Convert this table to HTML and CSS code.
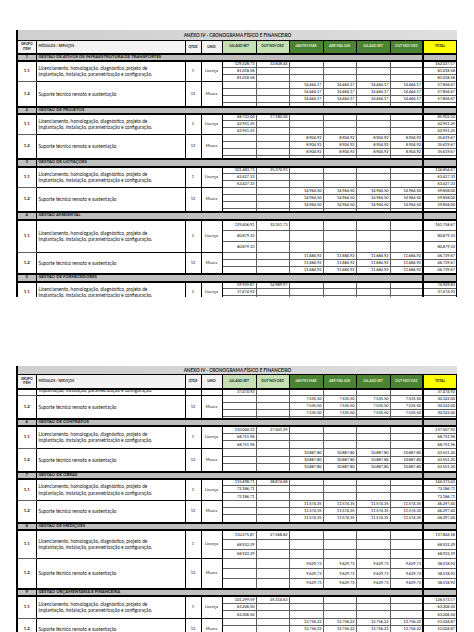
FILE: index.html
```html
<!DOCTYPE html>
<html lang="pt">
<head>
<meta charset="utf-8">
<title>Anexo IV - Cronograma Físico e Financeiro</title>
<link rel="stylesheet" href="styles.css">
</head>
<body>
<div class="page p1">
  <div class="title">ANEXO IV - CRONOGRAMA FÍSICO E FINANCEIRO</div>
  <table class="grid">
    <colgroup><col class="w1"><col class="w2"><col class="w3"><col class="w4"><col class="w5"><col class="w6"><col class="w5"><col class="w6"><col class="w5"><col class="w6"><col class="w5"></colgroup>
    <tr class="hd h13"><td class="hc first">GRUPO<br>ITEM</td><td class="hl">MÓDULOS / SERVIÇOS</td><td class="hc">QTDE</td><td class="hc">UNID</td><td class="g1">JUL AGO SET</td><td class="g1">OUT NOV DEZ</td><td class="g2">JAN FEV MAR</td><td class="g2">ABR MAI JUN</td><td class="g2">JUL AGO SET</td><td class="g2">OUT NOV DEZ</td><td class="ty">TOTAL</td></tr>

    <tr class="sec h7"><td class="n">1</td><td class="st" colspan="9">GESTÃO DE ATIVOS DE INFRAESTRUTURA DE TRANSPORTES</td><td class="t"></td></tr>
    <tr class="h7"><td class="it" rowspan="3">1.1</td><td class="d" rowspan="3">Licenciamento, homologação, diagnóstico, projeto de<br>implantação, instalação, parametrização e configuração.</td><td class="c" rowspan="3">1</td><td class="c" rowspan="3">Licença</td><td class="m">129.428,73</td><td class="m">32.608,44</td><td class="m"></td><td class="m"></td><td class="m"></td><td class="m"></td><td class="m t">162.037,17</td></tr>
    <tr class="h7"><td class="m">81.018,58</td><td class="m"></td><td class="m"></td><td class="m"></td><td class="m"></td><td class="m"></td><td class="m t">81.018,58</td></tr>
    <tr class="h7"><td class="m">81.018,58</td><td class="m"></td><td class="m"></td><td class="m"></td><td class="m"></td><td class="m"></td><td class="m t">81.018,58</td></tr>
    <tr class="h7"><td class="it" rowspan="4">1.2</td><td class="d" rowspan="4">Suporte técnico remoto e sustentação</td><td class="c" rowspan="4">12</td><td class="c" rowspan="4">Meses</td><td class="m"></td><td class="m"></td><td class="m">14.464,17</td><td class="m">14.464,17</td><td class="m">14.464,17</td><td class="m">14.464,17</td><td class="m t">57.856,67</td></tr>
    <tr class="h7"><td class="m"></td><td class="m"></td><td class="m">14.464,17</td><td class="m">14.464,17</td><td class="m">14.464,17</td><td class="m">14.464,17</td><td class="m t">57.856,67</td></tr>
    <tr class="h7"><td class="m"></td><td class="m"></td><td class="m">14.464,17</td><td class="m">14.464,17</td><td class="m">14.464,17</td><td class="m">14.464,17</td><td class="m t">57.856,67</td></tr>
    <tr class="h4"><td class="m"></td><td class="m"></td><td class="m"></td><td class="m"></td><td class="m"></td><td class="m"></td><td class="m t"></td></tr>

    <tr class="sec h7"><td class="n">2</td><td class="st" colspan="9">GESTÃO DE PROJETOS</td><td class="t"></td></tr>
    <tr class="h7"><td class="it" rowspan="3">1.1</td><td class="d" rowspan="3">Licenciamento, homologação, diagnóstico, projeto de<br>implantação, instalação, parametrização e configuração.</td><td class="c" rowspan="3">1</td><td class="c" rowspan="3">Licença</td><td class="m">68.722,00</td><td class="m">17.180,50</td><td class="m"></td><td class="m"></td><td class="m"></td><td class="m"></td><td class="m t">85.902,50</td></tr>
    <tr class="h7"><td class="m">42.951,25</td><td class="m"></td><td class="m"></td><td class="m"></td><td class="m"></td><td class="m"></td><td class="m t">42.951,25</td></tr>
    <tr class="h7"><td class="m">42.951,25</td><td class="m"></td><td class="m"></td><td class="m"></td><td class="m"></td><td class="m"></td><td class="m t">42.951,25</td></tr>
    <tr class="h7"><td class="it" rowspan="4">1.2</td><td class="d" rowspan="4">Suporte técnico remoto e sustentação</td><td class="c" rowspan="4">12</td><td class="c" rowspan="4">Meses</td><td class="m"></td><td class="m"></td><td class="m">8.904,92</td><td class="m">8.904,92</td><td class="m">8.904,92</td><td class="m">8.904,92</td><td class="m t">35.619,67</td></tr>
    <tr class="h7"><td class="m"></td><td class="m"></td><td class="m">8.904,92</td><td class="m">8.904,92</td><td class="m">8.904,92</td><td class="m">8.904,92</td><td class="m t">35.619,67</td></tr>
    <tr class="h7"><td class="m"></td><td class="m"></td><td class="m">8.904,92</td><td class="m">8.904,92</td><td class="m">8.904,92</td><td class="m">8.904,92</td><td class="m t">35.619,67</td></tr>
    <tr class="h3"><td class="m"></td><td class="m"></td><td class="m"></td><td class="m"></td><td class="m"></td><td class="m"></td><td class="m t"></td></tr>

    <tr class="sec h8"><td class="n">3</td><td class="st" colspan="9">GESTÃO DE LICITAÇÕES</td><td class="t"></td></tr>
    <tr class="h7"><td class="it" rowspan="3">1.1</td><td class="d" rowspan="3">Licenciamento, homologação, diagnóstico, projeto de<br>implantação, instalação, parametrização e configuração.</td><td class="c" rowspan="3">1</td><td class="c" rowspan="3">Licença</td><td class="m">101.483,73</td><td class="m">25.370,93</td><td class="m"></td><td class="m"></td><td class="m"></td><td class="m"></td><td class="m t">126.854,67</td></tr>
    <tr class="h7"><td class="m">63.427,33</td><td class="m"></td><td class="m"></td><td class="m"></td><td class="m"></td><td class="m"></td><td class="m t">63.427,33</td></tr>
    <tr class="h7"><td class="m">63.427,33</td><td class="m"></td><td class="m"></td><td class="m"></td><td class="m"></td><td class="m"></td><td class="m t">63.427,33</td></tr>
    <tr class="h7"><td class="it" rowspan="4">1.2</td><td class="d" rowspan="4">Suporte técnico remoto e sustentação</td><td class="c" rowspan="4">12</td><td class="c" rowspan="4">Meses</td><td class="m"></td><td class="m"></td><td class="m">14.964,50</td><td class="m">14.964,50</td><td class="m">14.964,50</td><td class="m">14.964,50</td><td class="m t">59.858,00</td></tr>
    <tr class="h7"><td class="m"></td><td class="m"></td><td class="m">14.964,50</td><td class="m">14.964,50</td><td class="m">14.964,50</td><td class="m">14.964,50</td><td class="m t">59.858,00</td></tr>
    <tr class="h7"><td class="m"></td><td class="m"></td><td class="m">14.964,50</td><td class="m">14.964,50</td><td class="m">14.964,50</td><td class="m">14.964,50</td><td class="m t">59.858,00</td></tr>
    <tr class="h3"><td class="m"></td><td class="m"></td><td class="m"></td><td class="m"></td><td class="m"></td><td class="m"></td><td class="m t"></td></tr>

    <tr class="sec h8"><td class="n">4</td><td class="st" colspan="9">GESTÃO AMBIENTAL</td><td class="t"></td></tr>
    <tr class="h11"><td class="it" rowspan="3">1.1</td><td class="d" rowspan="3">Licenciamento, homologação, diagnóstico, projeto de<br>implantação, instalação, parametrização e configuração.</td><td class="c" rowspan="3">1</td><td class="c" rowspan="3">Licença</td><td class="m">129.406,91</td><td class="m">32.351,73</td><td class="m"></td><td class="m"></td><td class="m"></td><td class="m"></td><td class="m t">161.758,67</td></tr>
    <tr class="h11"><td class="m">80.879,33</td><td class="m"></td><td class="m"></td><td class="m"></td><td class="m"></td><td class="m"></td><td class="m t">80.879,33</td></tr>
    <tr class="h11"><td class="m">80.879,33</td><td class="m"></td><td class="m"></td><td class="m"></td><td class="m"></td><td class="m"></td><td class="m t">80.879,33</td></tr>
    <tr class="h7"><td class="it" rowspan="3">1.2</td><td class="d" rowspan="3">Suporte técnico remoto e sustentação</td><td class="c" rowspan="3">12</td><td class="c" rowspan="3">Meses</td><td class="m"></td><td class="m"></td><td class="m">11.684,92</td><td class="m">11.684,92</td><td class="m">11.684,92</td><td class="m">11.684,92</td><td class="m t">46.739,67</td></tr>
    <tr class="h7"><td class="m"></td><td class="m"></td><td class="m">11.684,92</td><td class="m">11.684,92</td><td class="m">11.684,92</td><td class="m">11.684,92</td><td class="m t">46.739,67</td></tr>
    <tr class="h7"><td class="m"></td><td class="m"></td><td class="m">11.684,92</td><td class="m">11.684,92</td><td class="m">11.684,92</td><td class="m">11.684,92</td><td class="m t">46.739,67</td></tr>

    <tr class="sec h8"><td class="n">5</td><td class="st" colspan="9">GESTÃO DE FORNECEDORES</td><td class="t"></td></tr>
    <tr class="h7"><td class="it" rowspan="3">1.1</td><td class="d" rowspan="3">Licenciamento, homologação, diagnóstico, projeto de<br>implantação, instalação, parametrização e configuração.</td><td class="c" rowspan="3">1</td><td class="c" rowspan="3">Licença</td><td class="m">59.959,87</td><td class="m">14.989,97</td><td class="m"></td><td class="m"></td><td class="m"></td><td class="m"></td><td class="m t">74.949,83</td></tr>
    <tr class="h7"><td class="m">37.474,92</td><td class="m"></td><td class="m"></td><td class="m"></td><td class="m"></td><td class="m"></td><td class="m t">37.474,92</td></tr>
    <tr class="h7"><td class="m"></td><td class="m"></td><td class="m"></td><td class="m"></td><td class="m"></td><td class="m"></td><td class="m t"></td></tr>
  </table>
</div>

<div class="page p2">
  <div class="title">ANEXO IV - CRONOGRAMA FÍSICO E FINANCEIRO</div>
  <table class="grid">
    <colgroup><col class="w1"><col class="w2"><col class="w3"><col class="w4"><col class="w5"><col class="w6"><col class="w5"><col class="w6"><col class="w5"><col class="w6"><col class="w5"></colgroup>
    <tr class="hd h14"><td class="hc first">GRUPO<br>ITEM</td><td class="hl">MÓDULOS / SERVIÇOS</td><td class="hc">QTDE</td><td class="hc">UNID</td><td class="g1">JUL AGO SET</td><td class="g1">OUT NOV DEZ</td><td class="g2">JAN FEV MAR</td><td class="g2">ABR MAI JUN</td><td class="g2">JUL AGO SET</td><td class="g2">OUT NOV DEZ</td><td class="ty">TOTAL</td></tr>

    <tr class="h7"><td class="it"></td><td class="d top"><div class="clip"><span>implantação, instalação, parametrização e configuração.</span></div></td><td class="c"></td><td class="c"></td><td class="m">37.474,92</td><td class="m"></td><td class="m"></td><td class="m"></td><td class="m"></td><td class="m"></td><td class="m t">37.474,92</td></tr>
    <tr class="h7"><td class="it" rowspan="4">1.2</td><td class="d" rowspan="4">Suporte técnico remoto e sustentação</td><td class="c" rowspan="4">12</td><td class="c" rowspan="4">Meses</td><td class="m"></td><td class="m"></td><td class="m">7.535,50</td><td class="m">7.535,50</td><td class="m">7.535,50</td><td class="m">7.535,50</td><td class="m t">30.142,00</td></tr>
    <tr class="h7"><td class="m"></td><td class="m"></td><td class="m">7.535,50</td><td class="m">7.535,50</td><td class="m">7.535,50</td><td class="m">7.535,50</td><td class="m t">30.142,00</td></tr>
    <tr class="h7"><td class="m"></td><td class="m"></td><td class="m">7.535,50</td><td class="m">7.535,50</td><td class="m">7.535,50</td><td class="m">7.535,50</td><td class="m t">30.142,00</td></tr>
    <tr class="h2"><td class="m"></td><td class="m"></td><td class="m"></td><td class="m"></td><td class="m"></td><td class="m"></td><td class="m t"></td></tr>

    <tr class="sec h7"><td class="n">6</td><td class="st" colspan="9">GESTÃO DE CONTRATOS</td><td class="t"></td></tr>
    <tr class="h8"><td class="it" rowspan="3">1.1</td><td class="d" rowspan="3">Licenciamento, homologação, diagnóstico, projeto de<br>implantação, instalação, parametrização e configuração.</td><td class="c" rowspan="3">1</td><td class="c" rowspan="3">Licença</td><td class="m">110.004,33</td><td class="m">27.501,59</td><td class="m"></td><td class="m"></td><td class="m"></td><td class="m"></td><td class="m t">137.507,92</td></tr>
    <tr class="h7"><td class="m">68.751,96</td><td class="m"></td><td class="m"></td><td class="m"></td><td class="m"></td><td class="m"></td><td class="m t">68.751,96</td></tr>
    <tr class="h8"><td class="m">68.751,96</td><td class="m"></td><td class="m"></td><td class="m"></td><td class="m"></td><td class="m"></td><td class="m t">68.751,96</td></tr>
    <tr class="h8"><td class="it" rowspan="3">1.2</td><td class="d" rowspan="3">Suporte técnico remoto e sustentação</td><td class="c" rowspan="3">12</td><td class="c" rowspan="3">Meses</td><td class="m"></td><td class="m"></td><td class="m">10.887,80</td><td class="m">10.887,80</td><td class="m">10.887,80</td><td class="m">10.887,80</td><td class="m t">43.551,20</td></tr>
    <tr class="h7"><td class="m"></td><td class="m"></td><td class="m">10.887,80</td><td class="m">10.887,80</td><td class="m">10.887,80</td><td class="m">10.887,80</td><td class="m t">43.551,20</td></tr>
    <tr class="h8"><td class="m"></td><td class="m"></td><td class="m">10.887,80</td><td class="m">10.887,80</td><td class="m">10.887,80</td><td class="m">10.887,80</td><td class="m t">43.551,20</td></tr>

    <tr class="sec h7"><td class="n">7</td><td class="st" colspan="9">GESTÃO DE OBRAS</td><td class="t"></td></tr>
    <tr class="h7"><td class="it" rowspan="3">1.1</td><td class="d" rowspan="3">Licenciamento, homologação, diagnóstico, projeto de<br>implantação, instalação, parametrização e configuração.</td><td class="c" rowspan="3">1</td><td class="c" rowspan="3">Licença</td><td class="m">115.498,71</td><td class="m">28.874,68</td><td class="m"></td><td class="m"></td><td class="m"></td><td class="m"></td><td class="m t">144.373,42</td></tr>
    <tr class="h7"><td class="m">72.186,71</td><td class="m"></td><td class="m"></td><td class="m"></td><td class="m"></td><td class="m"></td><td class="m t">72.186,71</td></tr>
    <tr class="h8"><td class="m">72.186,71</td><td class="m"></td><td class="m"></td><td class="m"></td><td class="m"></td><td class="m"></td><td class="m t">72.186,71</td></tr>
    <tr class="h7"><td class="it" rowspan="3">1.2</td><td class="d" rowspan="3">Suporte técnico remoto e sustentação</td><td class="c" rowspan="3">12</td><td class="c" rowspan="3">Meses</td><td class="m"></td><td class="m"></td><td class="m">11.574,35</td><td class="m">11.574,35</td><td class="m">11.574,35</td><td class="m">11.574,35</td><td class="m t">46.297,40</td></tr>
    <tr class="h7"><td class="m"></td><td class="m"></td><td class="m">11.574,35</td><td class="m">11.574,35</td><td class="m">11.574,35</td><td class="m">11.574,35</td><td class="m t">46.297,40</td></tr>
    <tr class="h8"><td class="m"></td><td class="m"></td><td class="m">11.574,35</td><td class="m">11.574,35</td><td class="m">11.574,35</td><td class="m">11.574,35</td><td class="m t">46.297,40</td></tr>

    <tr class="sec h7"><td class="n">8</td><td class="st" colspan="9">GESTÃO DE MEDIÇÕES</td><td class="t"></td></tr>
    <tr class="h10"><td class="it" rowspan="3">1.1</td><td class="d" rowspan="3">Licenciamento, homologação, diagnóstico, projeto de<br>implantação, instalação, parametrização e configuração.</td><td class="c" rowspan="3">1</td><td class="c" rowspan="3">Licença</td><td class="m">110.275,87</td><td class="m">27.568,82</td><td class="m"></td><td class="m"></td><td class="m"></td><td class="m"></td><td class="m t">137.844,58</td></tr>
    <tr class="h10"><td class="m">68.922,29</td><td class="m"></td><td class="m"></td><td class="m"></td><td class="m"></td><td class="m"></td><td class="m t">68.922,29</td></tr>
    <tr class="h9"><td class="m">68.922,29</td><td class="m"></td><td class="m"></td><td class="m"></td><td class="m"></td><td class="m"></td><td class="m t">68.922,29</td></tr>
    <tr class="h10"><td class="it" rowspan="3">1.2</td><td class="d" rowspan="3">Suporte técnico remoto e sustentação</td><td class="c" rowspan="3">12</td><td class="c" rowspan="3">Meses</td><td class="m"></td><td class="m"></td><td class="m">9.629,73</td><td class="m">9.629,73</td><td class="m">9.629,73</td><td class="m">9.629,73</td><td class="m t">38.518,92</td></tr>
    <tr class="h10"><td class="m"></td><td class="m"></td><td class="m">9.629,73</td><td class="m">9.629,73</td><td class="m">9.629,73</td><td class="m">9.629,73</td><td class="m t">38.518,92</td></tr>
    <tr class="h10"><td class="m"></td><td class="m"></td><td class="m">9.629,73</td><td class="m">9.629,73</td><td class="m">9.629,73</td><td class="m">9.629,73</td><td class="m t">38.518,92</td></tr>

    <tr class="sec h7"><td class="n">9</td><td class="st" colspan="9">GESTÃO ORÇAMENTÁRIA E FINANCEIRA</td><td class="t"></td></tr>
    <tr class="h8"><td class="it" rowspan="3">1.1</td><td class="d" rowspan="3">Licenciamento, homologação, diagnóstico, projeto de<br>implantação, instalação, parametrização e configuração.</td><td class="c" rowspan="3">1</td><td class="c" rowspan="3">Licença</td><td class="m">101.299,59</td><td class="m">25.314,63</td><td class="m"></td><td class="m"></td><td class="m"></td><td class="m"></td><td class="m t">126.573,17</td></tr>
    <tr class="h7"><td class="m">63.206,50</td><td class="m"></td><td class="m"></td><td class="m"></td><td class="m"></td><td class="m"></td><td class="m t">63.206,50</td></tr>
    <tr class="h8"><td class="m">63.206,50</td><td class="m"></td><td class="m"></td><td class="m"></td><td class="m"></td><td class="m"></td><td class="m t">63.206,50</td></tr>
    <tr class="h7"><td class="it" rowspan="3">1.2</td><td class="d" rowspan="3">Suporte técnico remoto e sustentação</td><td class="c" rowspan="3">12</td><td class="c" rowspan="3">Meses</td><td class="m"></td><td class="m"></td><td class="m">12.756,22</td><td class="m">12.756,22</td><td class="m">12.756,22</td><td class="m">12.756,22</td><td class="m t">51.024,87</td></tr>
    <tr class="h7"><td class="m"></td><td class="m"></td><td class="m">12.756,22</td><td class="m">12.756,22</td><td class="m">12.756,22</td><td class="m">12.756,22</td><td class="m t">51.024,87</td></tr>
    <tr class="h7"><td class="m"></td><td class="m"></td><td class="m">12.756,22</td><td class="m">12.756,22</td><td class="m">12.756,22</td><td class="m">12.756,22</td><td class="m t">51.024,87</td></tr>
  </table>
</div>
</body>
</html>
```

FILE: styles.css
```css
* { box-sizing: border-box; }
html, body { margin: 0; padding: 0; background: #fff; }
body { font-family: Lato, "Liberation Sans", sans-serif; color: #111; }

.page { margin-left: 16px; width: 441px; overflow: hidden; }
.p1 { margin-top: 30px; height: 267px; }
.p2 { margin-top: 69px; }

.title {
  background: linear-gradient(90deg, #cfcfcf, #d8d8d8 60%, #dedede);
  border-left: 2px solid #000;
  font-weight: 700;
  font-size: 4.6px;
  text-align: center;
  color: #1a1a1a;
}
.p1 .title { height: 10px; line-height: 10px; }
.p2 .title { height: 8px; line-height: 8px; }

.grid { border-collapse: collapse; table-layout: fixed; width: 441px; }
.w1 { width: 19px; }
.w2 { width: 149px; }
.w3 { width: 16px; }
.w4 { width: 21px; }
.w5 { width: 34px; }
.w6 { width: 33px; }

.grid td {
  padding: 0;
  border: 1px solid #5e5e5e;
  overflow: hidden;
  white-space: nowrap;
  vertical-align: middle;
  line-height: 1;
}

.h2 { height: 2px; }
.h3 { height: 3px; }
.h4 { height: 4px; }
.h7 { height: 7px; }
.h8 { height: 8px; }
.h9 { height: 9px; }
.h10 { height: 10px; }
.h11 { height: 11px; }
.h13 { height: 13px; }
.h14 { height: 14px; }

/* header */
.hd td {
  border: 1px solid #000;
  border-bottom: 2px solid #000;
  font-weight: 700;
  font-size: 3.3px;
  text-align: center;
  background: #f3f3f3;
  color: #1a1a1a;
}
.hd .hc { line-height: 1.3; }
.hd .first { border-left: 2px solid #000; }
.hd .hl { text-align: left; padding-left: 2px; }
.hd .g1 { background: #c6e0b4; }
.hd .g2 { background: #4a8433; color: #e4f0da; }
.hd .ty { background: #ffff00; border-left: 2px solid #000; border-right: 2px solid #000; }

/* section rows */
.sec td {
  background: #bfbfbf;
  border-top: 2px solid #000;
  border-bottom: 2px solid #000;
  font-weight: 700;
  font-size: 4.3px;
  color: #161616;
}
.sec .n { text-align: center; border-left: 2px solid #000; border-right: 1px solid #000; }
.sec .st { text-align: left; padding-left: 2px; }

/* left cells */
.it {
  border-left: 2px solid #000 !important;
  border-right: 1px solid #000 !important;
  border-top: 1px solid #000;
  border-bottom: 1px solid #000;
  text-align: center;
  font-size: 4.3px;
  font-weight: 700;
  background: #fff;
}
.d {
  border: 1px solid #000 !important;
  text-align: left;
  padding-left: 2px !important;
  font-size: 4.7px;
  line-height: 6.4px !important;
  background: #fff;
}
.d.top { vertical-align: top !important; }
.clip { height: 3px; overflow: hidden; }
.clip span { display: block; margin-top: -3px; line-height: 6px; }
.c {
  border: 1px solid #000 !important;
  text-align: center;
  font-size: 4px;
  background: #fff;
}

/* money cells */
.m {
  text-align: right;
  padding-right: 1px !important;
  font-size: 3.9px;
  color: #000;
  background: #fff;
}
.t { border-left: 2px solid #000 !important; border-right: 2px solid #000 !important; }
```
